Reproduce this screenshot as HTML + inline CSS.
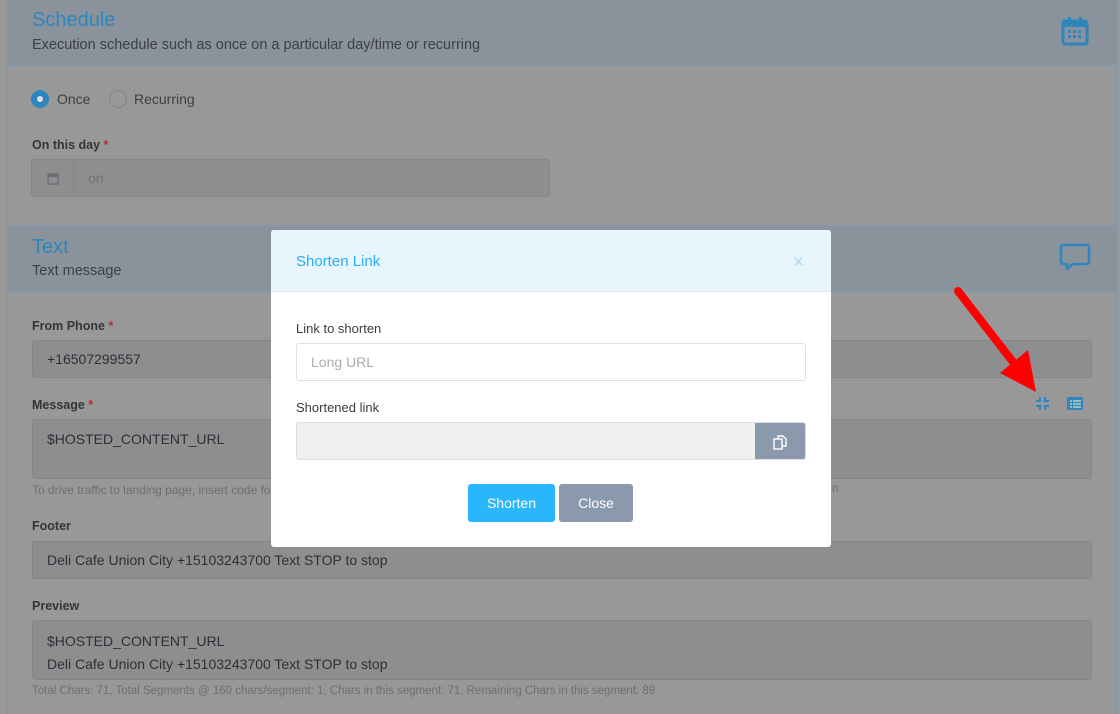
<!DOCTYPE html>
<html><head><style>
*{box-sizing:border-box;margin:0;padding:0}
body{width:1120px;height:714px;overflow:hidden;background:#989899;font-family:"Liberation Sans",sans-serif;position:relative}
.a{position:absolute}
.panel{left:7px;width:1110px;border-left:1px solid #7d97ad;border-right:1px solid #7d97ad}
.hdr{background:#8a939c;border-bottom:1px solid #7b9bb8}
.h1{color:#2f86bd;font-size:20px}
.sub{color:#3c3f43;font-size:14.5px}
.lbl{color:#333639;font-size:12.5px;font-weight:bold}
.star{color:#a33}
.inp{background:#8d8e90;border:1px solid #84868a;border-radius:3px;color:#2d3033;font-size:14px;padding-left:14px;display:flex;align-items:center}
.help{color:#6c6e71;font-size:11.5px}
</style></head><body>
<div class="a panel" style="top:0;height:714px"></div>
<div class="a panel hdr" style="top:0;height:66px"></div>
<div class="a h1" style="left:32px;top:9px">Schedule</div>
<div class="a sub" style="left:32px;top:37px">Execution schedule such as once on a particular day/time or recurring</div>
<svg class="a" style="left:1061px;top:16px" width="28" height="31" viewBox="0 0 28 31"><rect x="2" y="5" width="24" height="23" rx="2" fill="none" stroke="#2f86bd" stroke-width="3"/><rect x="2" y="5" width="24" height="6" fill="#2f86bd"/><rect x="7" y="1" width="3" height="6" fill="#2f86bd"/><rect x="18" y="1" width="3" height="6" fill="#2f86bd"/><g fill="#2f86bd"><rect x="7" y="14" width="3" height="3"/><rect x="12" y="14" width="3" height="3"/><rect x="17" y="14" width="3" height="3"/><rect x="7" y="19" width="3" height="3"/><rect x="12" y="19" width="3" height="3"/><rect x="17" y="19" width="3" height="3"/></g></svg>
<div class="a" style="left:31px;top:90px;width:18px;height:18px;border-radius:50%;background:#2f86bd"><div style="margin:6px;width:6px;height:6px;border-radius:50%;background:#ddd"></div></div>
<div class="a sub" style="left:57px;top:91px;font-size:14px">Once</div>
<div class="a" style="left:109px;top:90px;width:18px;height:18px;border-radius:50%;border:1px solid #848689"></div>
<div class="a sub" style="left:134px;top:91px;font-size:14px">Recurring</div>
<div class="a lbl" style="left:32px;top:138px">On this day <span class="star">*</span></div>
<div class="a inp" style="left:31px;top:159px;width:519px;height:38px;padding:0"><div style="width:42px;height:100%;border-right:1px solid #84868a;display:flex;align-items:center;justify-content:center"><svg width="12" height="13"><rect x="1" y="2" width="10" height="10" fill="none" stroke="#6b6d70" stroke-width="1.3"/><rect x="1" y="2" width="10" height="3" fill="#6b6d70"/></svg></div><span style="color:#6f7174;margin-left:14px">on</span></div>
<div class="a panel hdr" style="top:225px;height:67px;border-top:1px solid #7b9bb8"></div>
<div class="a h1" style="left:32px;top:236px">Text</div>
<div class="a sub" style="left:32px;top:263px">Text message</div>
<svg class="a" style="left:1059px;top:242px" width="32" height="32" viewBox="0 0 32 32"><path d="M4 3h24a2 2 0 0 1 2 2v15a2 2 0 0 1-2 2H14l-6 5v-5H4a2 2 0 0 1-2-2V5a2 2 0 0 1 2-2z" fill="none" stroke="#2f86bd" stroke-width="2.6" stroke-linejoin="round"/></svg>
<div class="a lbl" style="left:32px;top:319px">From Phone <span class="star">*</span></div>
<div class="a inp" style="left:32px;top:340px;width:1060px;height:38px">+16507299557</div>
<div class="a lbl" style="left:32px;top:398px">Message <span class="star">*</span></div>
<svg class="a" style="left:1035px;top:396px" width="15" height="15" viewBox="0 0 15 15" fill="none" stroke="#2f86bd" stroke-width="2"><path d="M5 1v4H1M10 1v4h4M5 14v-4H1M10 14v-4h4"/></svg>
<svg class="a" style="left:1067px;top:397px" width="16" height="13"><rect width="16" height="13" rx="1.5" fill="#2f86bd"/><g fill="#9bb"><rect x="3" y="3" width="2" height="2"/><rect x="6" y="3" width="8" height="2"/><rect x="3" y="6" width="2" height="2"/><rect x="6" y="6" width="8" height="2"/><rect x="3" y="9" width="2" height="2"/><rect x="6" y="9" width="8" height="2"/></g></svg>
<div class="a inp" style="left:32px;top:419px;width:1060px;height:60px;align-items:flex-start;padding-top:11px">$HOSTED_CONTENT_URL</div>
<div class="a help" style="left:32px;top:483px;font-size:12px">To drive traffic to landing page, insert code for hosted content</div>
<div class="a help" style="left:832px;top:483px">n.</div>
<div class="a lbl" style="left:32px;top:519px">Footer</div>
<div class="a inp" style="left:32px;top:541px;width:1060px;height:38px">Deli Cafe Union City +15103243700 Text STOP to stop</div>
<div class="a lbl" style="left:32px;top:599px">Preview</div>
<div class="a inp" style="left:32px;top:620px;width:1060px;height:60px;display:block;padding-top:9px;line-height:23px">$HOSTED_CONTENT_URL<br>Deli Cafe Union City +15103243700 Text STOP to stop</div>
<div class="a help" style="left:32px;top:685px">Total Chars: 71, Total Segments @ 160 chars/segment: 1, Chars in this segment: 71, Remaining Chars in this segment: 89</div>
<svg class="a" style="left:950px;top:285px" width="100" height="115"><path d="M8 6 L70 86" stroke="#f00" stroke-width="8" stroke-linecap="round"/><path d="M50 88 L86 107 L78 65z" fill="#f00"/></svg>
<div class="a" style="left:271px;top:230px;width:560px;height:317px;background:#fff;border-radius:3px;overflow:hidden">
<div style="height:62px;background:#e8f5fd;border-bottom:1px solid #dbeaf3;position:relative"><div class="a" style="left:25px;top:23px;color:#29aef2;font-size:15px">Shorten Link</div><div class="a" style="left:522px;top:22px;color:#a8dcf7;font-size:19px">×</div></div>
<div class="a lbl" style="left:25px;top:91px;color:#3a3d40;font-weight:normal;font-size:13px">Link to shorten</div>
<div class="a" style="left:25px;top:113px;width:510px;height:38px;border:1px solid #dcdfe3;border-radius:3px;color:#a9adb1;font-size:14px;padding:10px 14px">Long URL</div>
<div class="a lbl" style="left:25px;top:170px;color:#3a3d40;font-weight:normal;font-size:13px">Shortened link</div>
<div class="a" style="left:25px;top:192px;width:510px;height:38px;border:1px solid #dcdfe3;border-radius:3px;background:#efefef;overflow:hidden"><div style="position:absolute;right:0;top:0;width:50px;height:38px;background:#8a99ab;display:flex;align-items:center;justify-content:center"><svg width="14" height="15" fill="none" stroke="#fff" stroke-width="1.4"><rect x="1" y="4" width="8" height="10"/><path d="M5 4V1h5l3 3v7H9"/></svg></div></div>
<div class="a" style="left:197px;top:254px;width:87px;height:38px;background:#29b6fb;border-radius:3px;color:#fff;font-size:14px;text-align:center;line-height:38px">Shorten</div>
<div class="a" style="left:288px;top:254px;width:74px;height:38px;background:#8a99ab;border-radius:3px;color:#fff;font-size:14px;text-align:center;line-height:38px">Close</div>
</div>
</body></html>
